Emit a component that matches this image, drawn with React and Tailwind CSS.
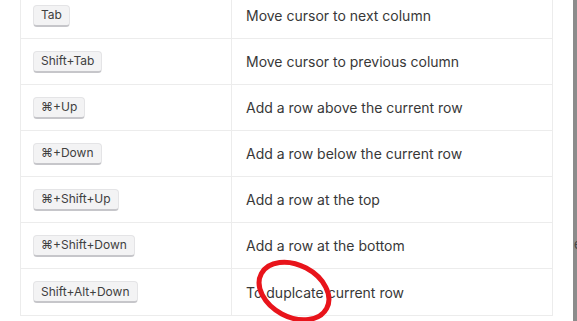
const shortcuts = [
  { keys: 'Tab', action: 'Move cursor to next column' },
  { keys: 'Shift+Tab', action: 'Move cursor to previous column' },
  { keys: '⌘+Up', action: 'Add a row above the current row' },
  { keys: '⌘+Down', action: 'Add a row below the current row' },
  { keys: '⌘+Shift+Up', action: 'Add a row at the top' },
  { keys: '⌘+Shift+Down', action: 'Add a row at the bottom' },
  { keys: 'Shift+Alt+Down', action: 'To duplcate current row' },
]

function Kbd({ children }) {
  return (
    <kbd className="inline-flex items-center h-[22px] px-[7px] rounded-[4px] bg-[#f3f3f4] border border-[#e4e4e6] border-b-[2px] border-b-[#c6c6ca] text-[12px] leading-none text-[#404040] font-['Inter',sans-serif]">
      {children}
    </kbd>
  )
}

export default function App() {
  return (
    <div className="relative w-[577px] h-[321px] overflow-hidden bg-white font-['Inter',sans-serif]">
      <div className="mt-[-7px] ml-[20px] w-[533px] border border-[#ececec] border-t-0">
        {shortcuts.map((row, i) => (
          <div
            key={row.keys}
            className={`flex h-[46px] ${i < shortcuts.length - 1 ? 'border-b border-[#ececec]' : ''}`}
          >
            <div className="w-[211px] shrink-0 flex items-center pl-[12px] border-r border-[#ececec]">
              <Kbd>{row.keys}</Kbd>
            </div>
            <div className="flex-1 flex items-center pl-[14px] text-[14px] text-[#383838]">
              {row.action}
            </div>
          </div>
        ))}
      </div>

      {/* window edge on the right */}
      <div className="absolute top-0 right-0 w-[4px] h-full bg-[#8c8c8c]">
        <span className="absolute left-[1px] top-[238px] text-[13px] leading-none text-[#444]">e</span>
      </div>

      {/* hand-drawn highlight around the typo */}
      <svg className="absolute inset-0 pointer-events-none" width="577" height="321">
        <ellipse
          cx="294"
          cy="291"
          rx="37"
          ry="26"
          transform="rotate(28 294 291)"
          fill="none"
          stroke="#e8141b"
          strokeWidth="5"
        />
      </svg>
    </div>
  )
}
